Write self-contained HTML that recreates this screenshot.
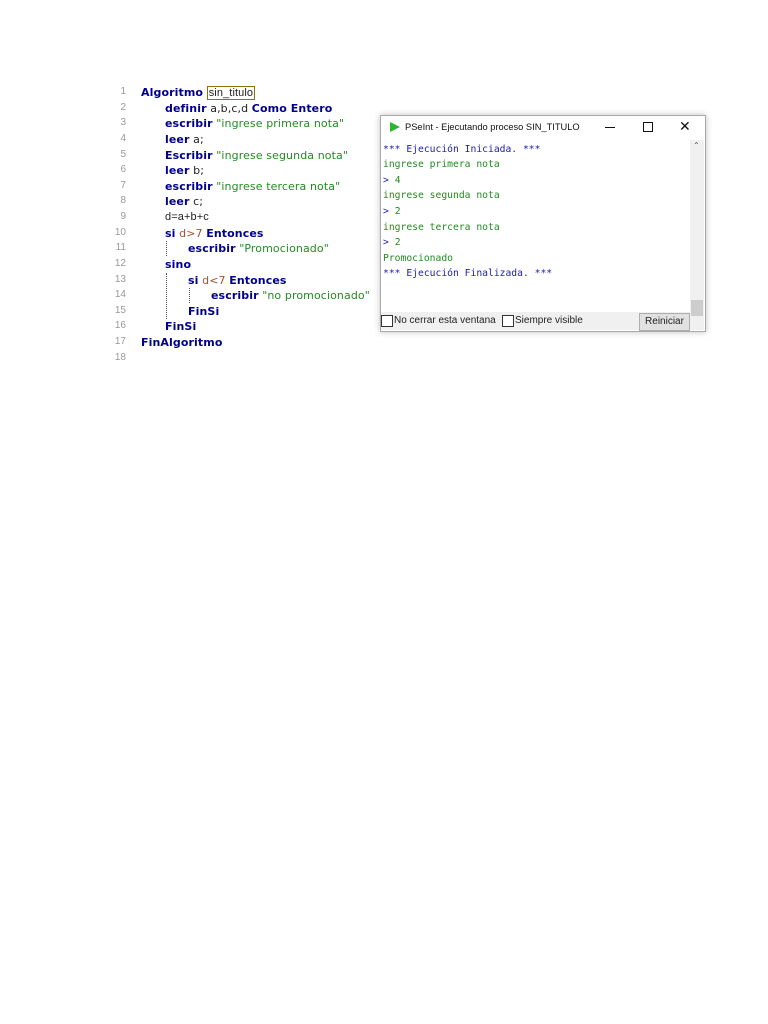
<!DOCTYPE html><html><head><style>
body{margin:0;width:768px;height:1024px;background:#fff;position:relative;font-family:"Liberation Sans",sans-serif;overflow:hidden}
.l{position:absolute;font-size:11px;line-height:15.6px;white-space:nowrap;font-family:"DejaVu Sans",sans-serif;letter-spacing:0.1px}
.n{position:absolute;left:110px;width:16px;text-align:right;color:#999;font-size:10px;font-family:"Liberation Sans",sans-serif}
.k{color:#00008b;font-weight:bold}.s{color:#228b22}.v{color:#222}.o{color:#a0522d}
.c{position:absolute;left:383px;font-family:"DejaVu Sans Mono",monospace;font-size:9.7px;line-height:15.6px;white-space:nowrap}
.b{color:#2020b0}.g{color:#228b22}
.dl{position:absolute;border-left:1px dotted #555;width:0}
</style></head><body>
<div class="n" style="top:86px">1</div><div class="l" style="top:85px;left:141px"><span class="k">Algoritmo</span> <span style="border:1px solid #8b7500;padding:0 1px;font-family:'Liberation Sans',sans-serif" class="v">sin_titulo</span></div>
<div class="n" style="top:102px">2</div><div class="l" style="top:101px;left:165px"><span class="k">definir</span> <span class="v">a,b,c,d</span> <span class="k">Como Entero</span></div>
<div class="n" style="top:117px">3</div><div class="l" style="top:116px;left:165px"><span class="k">escribir</span> <span class="s">"ingrese primera nota"</span></div>
<div class="n" style="top:133px">4</div><div class="l" style="top:132px;left:165px"><span class="k">leer</span> <span class="v">a;</span></div>
<div class="n" style="top:149px">5</div><div class="l" style="top:148px;left:165px"><span class="k">Escribir</span> <span class="s">"ingrese segunda nota"</span></div>
<div class="n" style="top:164px">6</div><div class="l" style="top:163px;left:165px"><span class="k">leer</span> <span class="v">b;</span></div>
<div class="n" style="top:180px">7</div><div class="l" style="top:179px;left:165px"><span class="k">escribir</span> <span class="s">"ingrese tercera nota"</span></div>
<div class="n" style="top:195px">8</div><div class="l" style="top:194px;left:165px"><span class="k">leer</span> <span class="v">c;</span></div>
<div class="n" style="top:211px">9</div><div class="l" style="top:210px;left:165px;font-size:11px;font-family:'Liberation Sans',sans-serif"><span class="v">d=a+b+c</span></div>
<div class="n" style="top:227px">10</div><div class="l" style="top:226px;left:165px"><span class="k">si</span> <span class="o">d&gt;7</span> <span class="k">Entonces</span></div>
<div class="n" style="top:242px">11</div><div class="l" style="top:241px;left:188px"><span class="k">escribir</span> <span class="s">"Promocionado"</span></div>
<div class="n" style="top:258px">12</div><div class="l" style="top:257px;left:165px"><span class="k">sino</span></div>
<div class="n" style="top:274px">13</div><div class="l" style="top:273px;left:188px"><span class="k">si</span> <span class="o">d&lt;7</span> <span class="k">Entonces</span></div>
<div class="n" style="top:289px">14</div><div class="l" style="top:288px;left:211px"><span class="k">escribir</span> <span class="s">"no promocionado"</span></div>
<div class="n" style="top:305px">15</div><div class="l" style="top:304px;left:188px"><span class="k">FinSi</span></div>
<div class="n" style="top:320px">16</div><div class="l" style="top:319px;left:165px"><span class="k">FinSi</span></div>
<div class="n" style="top:336px">17</div><div class="l" style="top:335px;left:141px"><span class="k">FinAlgoritmo</span></div>
<div class="n" style="top:352px">18</div>
<div class="dl" style="left:166px;top:241px;height:15px"></div>
<div class="dl" style="left:166px;top:273px;height:46px"></div>
<div class="dl" style="left:189px;top:288px;height:15px"></div>

<div style="position:absolute;left:380px;top:115px;width:324px;height:215px;border:1px solid #aaa;background:#fff;box-shadow:0 0 6px rgba(0,0,0,.25)"></div>
<svg style="position:absolute;left:389px;top:121px" width="12" height="12"><path d="M1 1L11 6L1 11Z" fill="#2db52d"/></svg>
<div style="position:absolute;left:405px;top:122px;font-size:9.3px;color:#111">PSeInt - Ejecutando proceso SIN_TITULO</div>
<div style="position:absolute;left:605px;top:127px;width:10px;height:1px;background:#111"></div>
<div style="position:absolute;left:643px;top:122px;width:8px;height:8px;border:1px solid #111"></div>
<div style="position:absolute;left:679px;top:118px;font-size:14px;color:#111">✕</div>
<div class="c b" style="top:142px">*** Ejecución Iniciada. ***</div>
<div class="c g" style="top:157px">ingrese primera nota</div>
<div class="c" style="top:173px"><span class="b">&gt;</span> <span class="g">4</span></div>
<div class="c g" style="top:188px">ingrese segunda nota</div>
<div class="c" style="top:204px"><span class="b">&gt;</span> <span class="g">2</span></div>
<div class="c g" style="top:220px">ingrese tercera nota</div>
<div class="c" style="top:235px"><span class="b">&gt;</span> <span class="g">2</span></div>
<div class="c g" style="top:251px">Promocionado</div>
<div class="c b" style="top:266px">*** Ejecución Finalizada. ***</div>
<div style="position:absolute;left:690px;top:140px;width:14px;height:190px;background:#f0f0f0"></div>
<div style="position:absolute;left:691px;top:300px;width:12px;height:16px;background:#cdcdcd"></div>
<div style="position:absolute;left:693px;top:141px;font-size:8px;color:#555">⌃</div>
<div style="position:absolute;left:381px;top:312px;width:309px;height:18px;background:#f0f0f0"></div>
<div style="position:absolute;left:381px;top:315px;width:10px;height:10px;border:1px solid #333;background:#fff"></div>
<div style="position:absolute;left:394px;top:315px;font-size:10px;color:#222">No cerrar esta ventana</div>
<div style="position:absolute;left:502px;top:315px;width:10px;height:10px;border:1px solid #333;background:#fff"></div>
<div style="position:absolute;left:515px;top:315px;font-size:10px;color:#222">Siempre visible</div>
<div style="position:absolute;left:639px;top:313px;width:49px;height:16px;border:1px solid #adadad;background:#e1e1e1;font-size:10px;line-height:16px;text-align:center;color:#222">Reiniciar</div>
</body></html>
